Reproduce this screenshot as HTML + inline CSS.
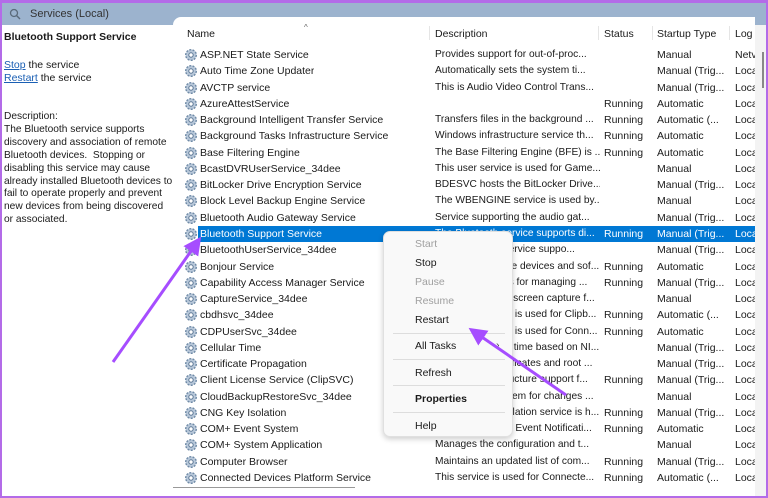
<!DOCTYPE html>
<html><head><style>
*{margin:0;padding:0;box-sizing:border-box}
body{width:768px;height:498px;overflow:hidden;background:#fff;font-family:"Liberation Sans",sans-serif;font-size:10.5px;color:#1a1a1a;position:relative}
.abs{position:absolute;white-space:nowrap}
#top{left:0;top:0;width:768px;height:3px;background:#b36be8}
#bar{left:0;top:3px;width:768px;height:22px;background:#9cb3ce}
#left{left:2px;top:25px;width:171px;height:471px;background:#fff}
#panel{left:173px;top:17px;width:582px;height:471px;background:#fff;border-top-left-radius:8px}
#rightgray{left:755px;top:25px;width:11px;height:471px;background:#f3f3f3}
.row{position:absolute;left:0;height:16.27px;line-height:16.27px;width:582px}
.row span{position:absolute;white-space:nowrap;overflow:hidden}
.sel{background:#0078d4;color:#fff}
.gear{position:absolute;left:11px;top:1px;width:14px;height:14px}
</style></head><body>
<div class="abs" id="top"></div>
<div class="abs" id="bar"></div>
<div class="abs" style="left:0;top:0;width:2px;height:498px;background:#b36be8"></div>
<div class="abs" style="left:766px;top:0;width:2px;height:498px;background:#b36be8"></div>
<div class="abs" style="left:0;top:496px;width:768px;height:2px;background:#b36be8"></div>
<svg class="abs" style="left:9px;top:8px" width="12" height="12"><circle cx="5" cy="5" r="3.5" fill="none" stroke="#5a6a7a" stroke-width="1.3"/><line x1="7.5" y1="7.5" x2="11" y2="11" stroke="#5a6a7a" stroke-width="1.4"/></svg>
<div class="abs" style="left:30px;top:8px;font-size:11px;color:#333">Services (Local)</div>
<div class="abs" id="left"></div>
<div class="abs" id="rightgray"></div>
<div class="abs" id="panel">
<div class="abs" style="left:14px;top:11px;color:#1a1a1a">Name</div>
<div class="abs" style="left:131px;top:6px;font-size:8px;color:#666">^</div>
<div class="abs" style="left:256px;top:9px;width:1px;height:14px;background:#e5e5e5"></div>
<div class="abs" style="left:262px;top:11px">Description</div>
<div class="abs" style="left:425px;top:9px;width:1px;height:14px;background:#e5e5e5"></div>
<div class="abs" style="left:431px;top:11px">Status</div>
<div class="abs" style="left:479px;top:9px;width:1px;height:14px;background:#e5e5e5"></div>
<div class="abs" style="left:484px;top:11px">Startup Type</div>
<div class="abs" style="left:556px;top:9px;width:1px;height:14px;background:#e5e5e5"></div>
<div class="abs" style="left:562px;top:11px">Log</div>
<div class="abs" style="left:0;top:470px;width:182px;height:1px;background:#999"></div>
<div id="rows" class="abs" style="left:0;top:30px"></div>
</div>
<div class="abs" style="left:762px;top:52px;width:2px;height:36px;background:#888"></div>
<div class="abs" style="left:4px;top:31px;font-weight:bold;font-size:10.5px">Bluetooth Support Service</div>
<div class="abs" style="left:4px;top:59px"><u style="color:#1a5fb4">Stop</u> the service</div>
<div class="abs" style="left:4px;top:72px"><u style="color:#1a5fb4">Restart</u> the service</div>
<div class="abs" style="left:4px;top:111px;line-height:12.9px;font-size:10.2px">Description:<br>The Bluetooth service supports<br>discovery and association of remote<br>Bluetooth devices.&nbsp; Stopping or<br>disabling this service may cause<br>already installed Bluetooth devices to<br>fail to operate properly and prevent<br>new devices from being discovered<br>or associated.</div>

<div class="abs" style="left:383px;top:231px;width:130px;height:206px;background:#f9f9f9;border:1px solid #e0e0e0;border-radius:7px;box-shadow:0 2px 6px rgba(0,0,0,.2)">
<div class="abs" style="left:31px;top:6px;color:#a0a0a0">Start</div>
<div class="abs" style="left:31px;top:25px">Stop</div>
<div class="abs" style="left:31px;top:44px;color:#a0a0a0">Pause</div>
<div class="abs" style="left:31px;top:63px;color:#a0a0a0">Resume</div>
<div class="abs" style="left:31px;top:82px">Restart</div>
<div class="abs" style="left:9px;top:101px;width:112px;height:1px;background:#ddd"></div>
<div class="abs" style="left:31px;top:108px">All Tasks</div>
<div class="abs" style="left:112px;top:107px;color:#444">›</div>
<div class="abs" style="left:9px;top:127px;width:112px;height:1px;background:#ddd"></div>
<div class="abs" style="left:31px;top:135px">Refresh</div>
<div class="abs" style="left:9px;top:153px;width:112px;height:1px;background:#ddd"></div>
<div class="abs" style="left:31px;top:161px;font-weight:bold">Properties</div>
<div class="abs" style="left:9px;top:180px;width:112px;height:1px;background:#ddd"></div>
<div class="abs" style="left:31px;top:188px">Help</div>
</div>

<svg class="abs" style="left:0;top:0" width="768" height="498">
<defs><marker id="h" markerWidth="6" markerHeight="6" refX="3" refY="3" orient="auto"><path d="M0,0 L6,3 L0,6 Z" fill="#a64dff"/></marker></defs>
<line x1="113" y1="362" x2="196" y2="244" stroke="#a64dff" stroke-width="3" marker-end="url(#h)"/>
<line x1="566" y1="395" x2="476" y2="333" stroke="#a64dff" stroke-width="3" marker-end="url(#h)"/>
</svg>

<script>
const d=[
["ASP.NET State Service","Provides support for out-of-proc...","","Manual","Netv"],
["Auto Time Zone Updater","Automatically sets the system ti...","","Manual (Trig...","Loca"],
["AVCTP service","This is Audio Video Control Trans...","","Manual (Trig...","Loca"],
["AzureAttestService","","Running","Automatic","Loca"],
["Background Intelligent Transfer Service","Transfers files in the background ...","Running","Automatic (...","Loca"],
["Background Tasks Infrastructure Service","Windows infrastructure service th...","Running","Automatic","Loca"],
["Base Filtering Engine","The Base Filtering Engine (BFE) is ...","Running","Automatic","Loca"],
["BcastDVRUserService_34dee","This user service is used for Game...","","Manual","Loca"],
["BitLocker Drive Encryption Service","BDESVC hosts the BitLocker Drive...","","Manual (Trig...","Loca"],
["Block Level Backup Engine Service","The WBENGINE service is used by...","","Manual","Loca"],
["Bluetooth Audio Gateway Service","Service supporting the audio gat...","","Manual (Trig...","Loca"],
["Bluetooth Support Service","The Bluetooth service supports di...","Running","Manual (Trig...","Loca"],
["BluetoothUserService_34dee","Bluetooth user service suppo...","","Manual (Trig...","Loca"],
["Bonjour Service","Enables hardware devices and sof...","Running","Automatic","Loca"],
["Capability Access Manager Service","Provides facilities for managing ...","Running","Manual (Trig...","Loca"],
["CaptureService_34dee","Enables optional screen capture f...","","Manual","Loca"],
["cbdhsvc_34dee","This user service is used for Clipb...","Running","Automatic (...","Loca"],
["CDPUserSvc_34dee","This user service is used for Conn...","Running","Automatic","Loca"],
["Cellular Time","This service sets time based on NI...","","Manual (Trig...","Loca"],
["Certificate Propagation","Copies user certificates and root ...","","Manual (Trig...","Loca"],
["Client License Service (ClipSVC)","Provides infrastructure support f...","Running","Manual (Trig...","Loca"],
["CloudBackupRestoreSvc_34dee","Monitors the system for changes ...","","Manual","Loca"],
["CNG Key Isolation","The CNG key isolation service is h...","Running","Manual (Trig...","Loca"],
["COM+ Event System","Supports System Event Notificati...","Running","Automatic","Loca"],
["COM+ System Application","Manages the configuration and t...","","Manual","Loca"],
["Computer Browser","Maintains an updated list of com...","Running","Manual (Trig...","Loca"],
["Connected Devices Platform Service","This service is used for Connecte...","Running","Automatic (...","Loca"]];
const gear='<svg class="gear" viewBox="0 0 14 14"><circle cx="7" cy="7" r="5.3" fill="#b8c8da" stroke="#6f8aa6" stroke-width="1.4" stroke-dasharray="2 1.3"/><circle cx="7" cy="7" r="2.2" fill="#fff" stroke="#5d7895" stroke-width="1"/></svg>';
let h='';
d.forEach((r,i)=>{
const s=i==11;
h+=`<div class="row" style="top:${i*16.27}px">${gear}<span class="${s?'sel':''}" style="left:25px;${s?'width:557px;padding-left:2px;left:25px;':'padding-left:2px;'}height:16.27px">${s?'':r[0]}</span>`;
if(s)h+=`<span style="left:27px;color:#fff">${r[0]}</span>`;
h+=`<span style="left:262px;width:165px;font-size:10.2px;${s?'color:#fff':''}">${r[1]}</span><span style="left:431px;${s?'color:#fff':''}">${r[2]}</span><span style="left:484px;${s?'color:#fff':''}">${r[3]}</span><span style="left:562px;width:20px;${s?'color:#fff':''}">${r[4]}</span></div>`;
});
document.getElementById('rows').innerHTML=h;
</script>
</body></html>
